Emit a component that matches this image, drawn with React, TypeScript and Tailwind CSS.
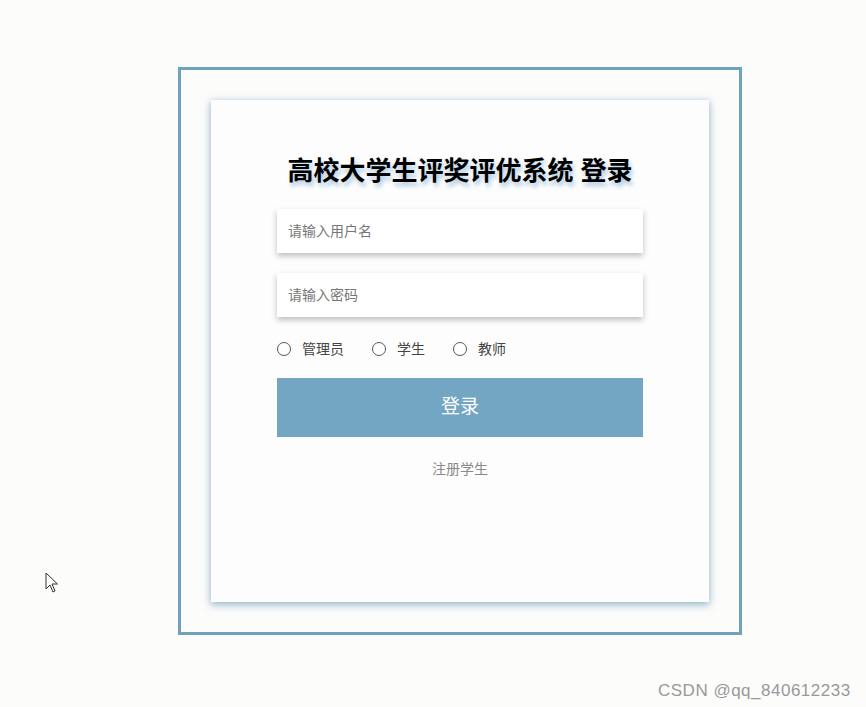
import React from "react";

const App = () => {
  const roles = ["管理员", "学生", "教师"];
  return (
    <div
      className="relative w-[866px] h-[707px] bg-[#fcfcfb] overflow-hidden"
      style={{ fontFamily: '"Liberation Sans", "Noto Sans CJK SC", sans-serif' }}
    >
      <div className="pt-[67px] pl-[178px]">
        <div className="w-[564px] h-[568px] border-[3px] border-[#6fa2bd] pt-[30px] pl-[30px]">
          <div className="w-[498px] h-[502px] bg-[#fdfdfd] shadow-[0_3px_8px_rgba(90,140,175,0.55),0_0_6px_rgba(120,160,190,0.25)] flex flex-col items-center">
            <h1 className="mt-[53px] text-[26px] font-bold text-black leading-[36px] [text-shadow:2px_4px_4px_rgba(110,160,200,0.55)]">
              高校大学生评奖评优系统 登录
            </h1>
            <div className="mt-[20px] w-[366px] flex flex-col gap-[20px]">
              <div className="h-[44px] bg-white shadow-[0_3px_6px_rgba(0,0,0,0.25)] flex items-center px-[11px] text-[14px] text-[#777]">
                请输入用户名
              </div>
              <div className="h-[44px] bg-white shadow-[0_3px_6px_rgba(0,0,0,0.25)] flex items-center px-[11px] text-[14px] text-[#777]">
                请输入密码
              </div>
            </div>
            <div className="mt-[22px] w-[366px] h-[20px] flex items-center gap-[28px] text-[14px] leading-[20px] text-[#444]">
              {roles.map((r) => (
                <label key={r} className="flex items-center gap-[11px]">
                  <span className="w-[14px] h-[14px] rounded-full border border-[#555] bg-white" />
                  {r}
                </label>
              ))}
            </div>
            <button className="mt-[19px] w-[366px] h-[59px] bg-[#72a6c2] text-white text-[19px]">
              登录
            </button>
            <div className="mt-[22px] text-[14px] leading-[20px] text-[#888]">注册学生</div>
          </div>
        </div>
      </div>
      <svg className="absolute left-[45px] top-[572px]" width="14" height="22" viewBox="0 0 14 22">
        <path d="M1 1 L1 17 L5 13 L8 20 L10 19 L7 12 L12.5 12 Z" fill="white" stroke="#333" strokeWidth="1" strokeLinejoin="round" />
      </svg>
      <div className="absolute left-[658px] top-[678px] text-[17px] text-[#999] tracking-[0.5px]">
        CSDN @qq_840612233
      </div>
    </div>
  );
};

export default App;
